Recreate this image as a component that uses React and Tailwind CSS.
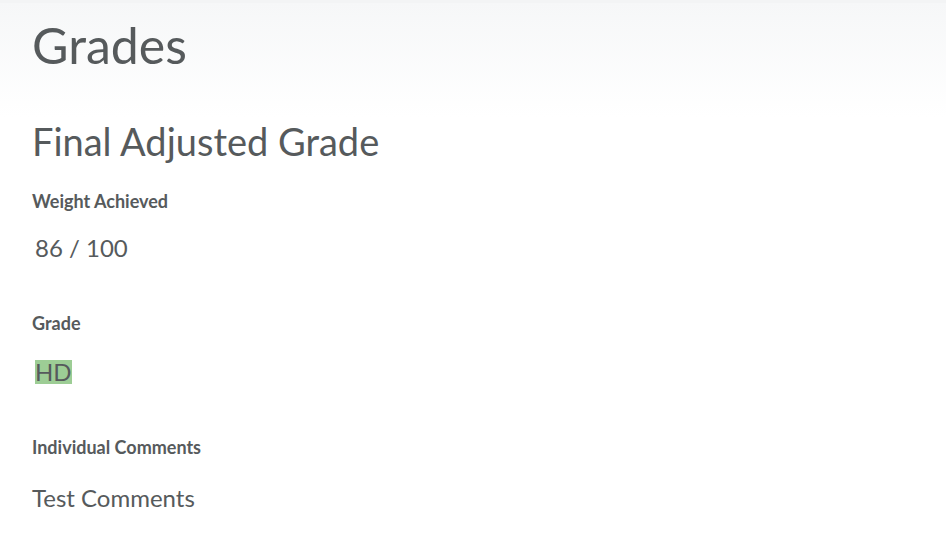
export default function App() {
  return (
    <div
      className="min-h-[545px] w-full bg-white text-[#565a5c]"
      style={{ fontFamily: "Lato, 'Noto Sans', sans-serif" }}
    >
      {/* page header band */}
      <div className="border-t-[3px] border-[#f3f4f5] bg-gradient-to-b from-[#f6f7f8] to-white px-8 pt-[10px] pb-[40px]">
        <h1 className="text-[50px] leading-[64px] font-normal">Grades</h1>
      </div>

      <div className="px-8">
        <h2 className="text-[38px] leading-[48px] font-normal">Final Adjusted Grade</h2>

        <div className="mt-[24px]">
          <div className="text-[18px] font-bold leading-[24px]">Weight Achieved</div>
          <div className="mt-[20px] pl-[3px] text-[24px] leading-[30px]">86 / 100</div>
        </div>

        <div className="mt-[48px]">
          <div className="text-[18px] font-bold leading-[24px]">Grade</div>
          <div className="mt-[25px] pl-[3px]">
            <span className="inline-block bg-[#9dcd95] text-[24px] leading-[24px]">HD</span>
          </div>
        </div>

        <div className="mt-[48px]">
          <div className="text-[18px] font-bold leading-[24px]">Individual Comments</div>
          <div className="mt-[24px] text-[24px] leading-[30px]">Test Comments</div>
        </div>
      </div>
    </div>
  );
}
